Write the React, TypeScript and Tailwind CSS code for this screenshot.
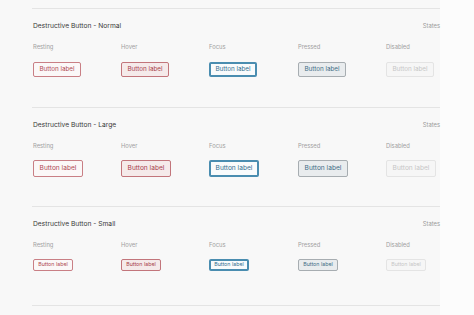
import React from 'react';

type Size = 'normal' | 'large' | 'small';
type State = 'resting' | 'hover' | 'focus' | 'pressed' | 'disabled';

const states: { key: State; label: string }[] = [
  { key: 'resting', label: 'Resting' },
  { key: 'hover', label: 'Hover' },
  { key: 'focus', label: 'Focus' },
  { key: 'pressed', label: 'Pressed' },
  { key: 'disabled', label: 'Disabled' },
];

const sizeClass: Record<Size, string> = {
  normal: 'w-[48px] h-[15px] text-[6.3px] rounded-[2px]',
  large: 'w-[50px] h-[17px] text-[6.6px] rounded-[2px]',
  small: 'w-[40px] h-[12px] text-[5.3px] rounded-[2px]',
};

const stateClass: Record<State, string> = {
  resting: 'border border-[#c97f85] text-[#b04a53] bg-[#fbf8f8]',
  hover: 'border border-[#c2757b] text-[#a8414a] bg-[#f5eaea]',
  focus: 'border-2 border-[#4a8db0] text-[#336f90] bg-[#f9fbfc]',
  pressed: 'border border-[#a7adb1] text-[#426c86] bg-[#e9ecee]',
  disabled: 'border border-[#e4e4e4] text-[#c6c6c6] bg-[#f6f6f6]',
};

const DemoButton = ({ size, state }: { size: Size; state: State }) => (
  <div className={`flex items-center justify-center leading-none ${sizeClass[size]} ${stateClass[state]}`}>
    Button label
  </div>
);

const Section = ({ title, size, gap }: { title: string; size: Size; gap: string }) => (
  <section className="h-[99px] border-t border-[#e4e4e4] pt-[12px]">
    <div className="flex items-center justify-between h-[10px]">
      <h3 className="text-[6.7px] text-[#3a3a3a] pl-[1px]">{title}</h3>
      <span className="text-[5.8px] text-[#9a9a9a]">States</span>
    </div>
    <div className="grid grid-cols-[88px_88px_89px_88px_1fr] mt-[11px]">
      {states.map((s) => (
        <div key={s.key} className="pl-[1px]">
          <div className="h-[10px] flex items-center text-[5.8px] text-[#a0a0a0]">{s.label}</div>
          <div className={gap}>
            <DemoButton size={size} state={s.key} />
          </div>
        </div>
      ))}
    </div>
  </section>
);

export default function App() {
  return (
    <div className="flex w-[474px] h-[315px] overflow-hidden bg-[#fcfcfc]" style={{ fontFamily: 'Inter, "Liberation Sans", sans-serif' }}>
      <div className="w-[440px] shrink-0 bg-[#f8f8f8] pl-[32px] pt-[8px]">
        <Section title="Destructive Button - Normal" size="normal" gap="mt-[10px]" />
        <Section title="Destructive Button - Large" size="large" gap="mt-[9px]" />
        <Section title="Destructive Button - Small" size="small" gap="mt-[9px]" />
        <div className="border-t border-[#e4e4e4]" />
      </div>
    </div>
  );
}
